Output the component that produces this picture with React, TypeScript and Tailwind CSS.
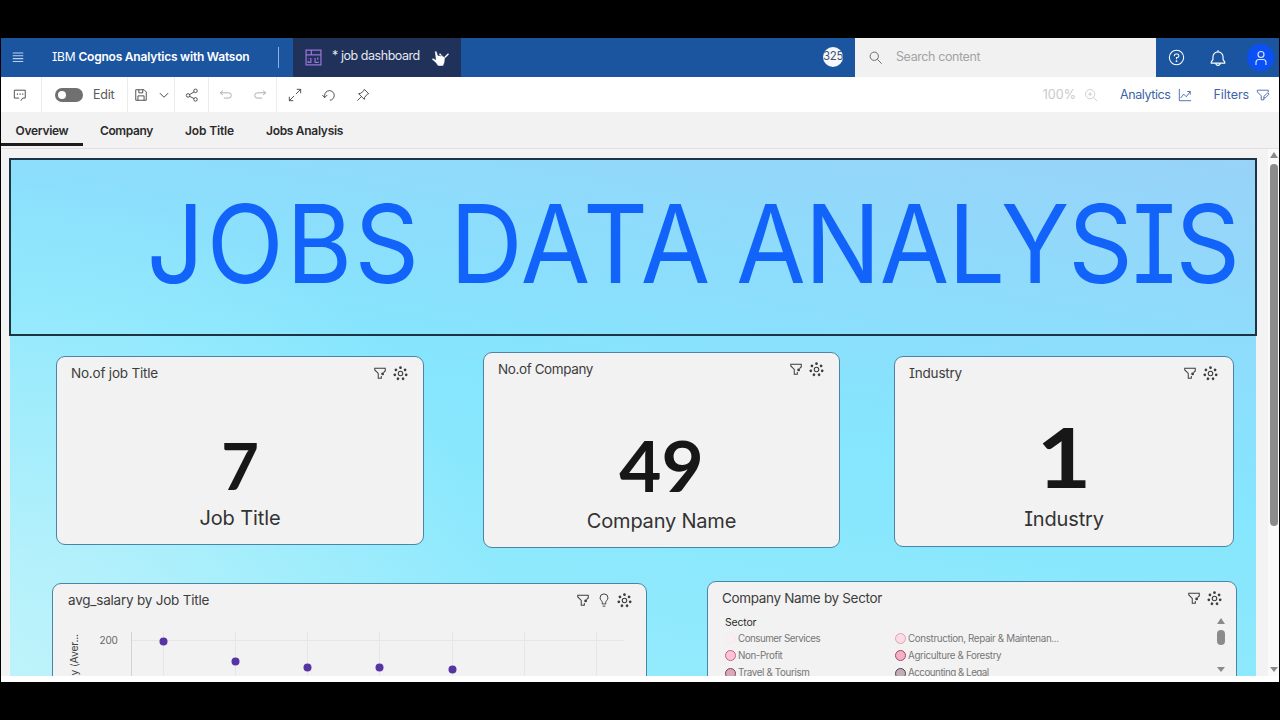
import type { ReactNode } from "react";

type IconProps = { className?: string; children: ReactNode };

const Icon = ({ className = "", children }: IconProps) => (
  <svg
    viewBox="0 0 32 32"
    fill="none"
    stroke="currentColor"
    strokeWidth="2"
    className={`shrink-0 ${className}`}
  >
    {children}
  </svg>
);

const FilterIcon = () => (
  <Icon className="w-3.5 h-3.5">
    <path d="M28 12V5H4v4l8 8v11h7v-5" strokeWidth="2.300" />
    <path d="M28 11l-4 4" strokeWidth="2.300" />
    <circle cx="22" cy="18" r="3.200" fill="currentColor" stroke="none" />
  </Icon>
);

const dots = [0, 51.4, 102.9, 154.3, 205.7, 257.1, 308.6];

const InsightIcon = () => (
  <Icon className="w-[15px] h-[15px]">
    <circle cx="16" cy="16" r="4.800" strokeWidth="2.300" />
    {dots.map((a) => (
      <circle
        key={a}
        cx="16"
        cy="3.500"
        r="2.900"
        fill="currentColor"
        stroke="none"
        transform={`rotate(${a} 16 16)`}
      />
    ))}
  </Icon>
);

const BulbIcon = () => (
  <Icon className="w-3.5 h-3.5">
    <path d="M12 25v-4c0-3-5-5-5-10a9 9 0 0 1 18 0c0 5-5 7-5 10v4zM13 30h6" strokeWidth="2.200" />
  </Icon>
);

const Header = () => (
  <header className="flex h-[39px] bg-[#1b559f] text-white">
    <div className="flex w-[292px] items-center">
      <Icon className="ml-[10px] w-3.5 h-3.5 text-[#bcd2f0]">
        <path d="M4 4.500h24M4 11h24M4 17.500h24M4 24h24" strokeWidth="2.500" />
      </Icon>
      <p className="ml-[27px] w-[198px] whitespace-nowrap pb-px text-xs tracking-[-0.22px]">
        IBM <span className="font-semibold">Cognos Analytics with Watson</span>
      </p>
      <div className="ml-7 h-[21px] w-px bg-[#8fb0dc]" />
    </div>
    <div className="relative flex w-[168px] items-center bg-[#20315a] pb-0.5">
      <Icon className="ml-3 mt-0.5 w-[17px] h-[17px] text-[#9b72dc]">
        <path d="M2 2h28v28H2zM2 11h28M12 2v9M7 17v1M11 17v8H6v-3M19 17v8h7M24 16v4" strokeWidth="2.300" />
      </Icon>
      <span className="ml-2.5 whitespace-nowrap text-[12.500px] tracking-[-0.45px] text-[#e6e9f0]">* job dashboard</span>
      <Icon className="absolute left-[145px] top-3 w-3 h-3">
        <path d="M4 10l12 12L28 10" strokeWidth="3.500" />
      </Icon>
      <svg viewBox="0 0 16 18" className="absolute left-[138px] top-3 h-[17px] w-[15px]">
        <path
          d="M4 1.500q1.200-1 2.200.4L7.500 6l1-.5 1.500.7 1.500-.4 1 1 1.600 0 .9 1.800-.5 4.400-1.500 4H7.500L5 13.500 1 10q0-1.700 2-1l2 1.300z"
          fill="#fff"
          stroke="#20315a"
          strokeWidth=".5"
        />
      </svg>
    </div>
    <div className="flex flex-1 items-center justify-end pb-0.5 pr-3">
      <div className="flex h-5 w-5 items-center overflow-hidden rounded-full bg-[#f4f8fc] text-[11.500px] tracking-[-0.3px] text-[#45556d]">
        325
      </div>
    </div>
    <div className="flex w-[301px] items-center bg-[#f1f1f1]">
      <Icon className="ml-3.5 w-3.5 h-3.5 text-[#5c5c5c]">
        <circle cx="12" cy="12" r="9.500" />
        <path d="M19 19l10 10" />
      </Icon>
      <span className="ml-[13px] text-[12.500px] tracking-[-0.4px] text-[#a3a3a3]">Search content</span>
    </div>
    <div className="flex w-[123px] items-center">
      <Icon className="ml-3 w-[17px] h-[17px]">
        <circle cx="16" cy="16" r="13.500" />
        <path d="M12 13.500v-1Q12 9.500 15 9.500h2q3.500 0 3.500 3.200T17 16h-1v3.500" />
        <circle cx="16" cy="23" r="1.600" fill="currentColor" stroke="none" />
      </Icon>
      <Icon className="ml-6 w-[18px] h-[18px]">
        <path d="M16 2v3M7 14a9 9 0 0 1 18 0v5l3 4v2H4v-2l3-4zM12 25a4 4 0 0 0 8 0" />
      </Icon>
      <div className="ml-5 flex h-[27px] w-[27px] items-center justify-center rounded-full bg-[#0b50f5]">
        <Icon className="w-4 h-4 text-[#d8e6ff]">
          <circle cx="16" cy="9" r="6" strokeWidth="2.300" />
          <path d="M6 30v-5q0-6 6-6h8q6 0 6 6v5" strokeWidth="2.300" />
        </Icon>
      </div>
    </div>
  </header>
);

const Toolbar = () => (
  <div className="flex h-[35px] bg-white text-[#3d3d3d]">
    <div className="flex w-[41px] items-center border-r border-[#ececec] pl-3">
      <Icon className="w-3.5 h-3.5">
        <path d="M18 29l4-6h6V5H3v18h11" />
        <path d="M9 14h2.500M15 14h2.500M21 14h2.500" strokeWidth="3" />
      </Icon>
    </div>
    <div className="flex w-[86px] items-center border-r border-[#ececec] pl-[13px]">
      <div className="h-3.5 w-7 rounded-full bg-[#707070] p-[3px]">
        <div className="h-2 w-2 rounded-full bg-white" />
      </div>
      <span className="ml-2.5 pt-0.5 text-[12.500px] tracking-[-0.2px] text-[#5a5a5a]">Edit</span>
    </div>
    <div className="flex w-[47px] items-center border-r border-[#ececec] pl-[6px]">
      <Icon className="w-3.5 h-3.5">
        <path d="M4 4h19l5 5v19H4zM11 4v7h9V4M9 28V18h14v10" />
      </Icon>
      <Icon className="ml-[10px] w-3 h-3">
        <path d="M5 11l11 11 11-11" strokeWidth="2.500" />
      </Icon>
    </div>
    <div className="flex w-[34px] items-center justify-center border-r border-[#ececec]">
      <Icon className="w-3.5 h-3.5">
        <circle cx="24" cy="6.500" r="4" />
        <circle cx="7" cy="17" r="4" />
        <circle cx="24" cy="26" r="4" />
        <path d="M10.500 15l10-6M10.500 19l10 5" />
      </Icon>
    </div>
    <div className="flex w-[68px] items-center border-r border-[#ececec] pl-2.5 text-[#a4a4a4]">
      <Icon className="w-3.5 h-3.5">
        <path d="M9 6l-6 5 6 5M3 11h19q6 0 6 6t-6 6H11" />
      </Icon>
      <Icon className="ml-5 w-3.5 h-3.5">
        <path d="M23 6l6 5-6 5M29 11H10q-6 0-6 6t6 6h11" />
      </Icon>
    </div>
    <div className="flex w-[102px] items-center pl-[11px]">
      <Icon className="w-3.5 h-3.5">
        <path d="M20 3h9v9M29 3L18 14M12 29H3v-9M3 29l11-11" />
      </Icon>
      <Icon className="ml-5 w-3.5 h-3.5">
        <path d="M18 28a11 11 0 1 0-12-11v5M1 16l5 6 6-6" />
      </Icon>
      <Icon className="ml-5 w-3.5 h-3.5">
        <path d="M19 3l10 10-3 1-6 7-1 5L6 13l5-1 7-6zM12.500 19.500L3 29" />
      </Icon>
    </div>
    <div className="flex flex-1 items-center justify-end pr-[9px] text-[12.500px] text-[#3d64a8]">
      <span className="pt-0.5 text-[#c9c9c9]">100%</span>
      <Icon className="ml-2 w-3.5 h-3.5 text-[#c9c9c9]">
        <circle cx="14" cy="14" r="10.500" />
        <path d="M22 22l8 8M14 9.500v9M9.500 14h9" />
      </Icon>
      <span className="ml-[22px] pt-0.5 tracking-[-0.4px]">Analytics</span>
      <Icon className="ml-[7px] w-3.5 h-3.5">
        <path d="M3 2v27h27M6 23l7-9 6 6L28 8M21 8h7v7" />
      </Icon>
      <span className="ml-[22px] pt-0.5 tracking-[-0.1px]">Filters</span>
      <Icon className="ml-[7px] w-3.5 h-3.5">
        <path d="M28 10V5H3v4l9 9v9h6v-5M18 19l9-8 3 3-8 8-4 1z" />
      </Icon>
    </div>
  </div>
);

const Tabs = () => (
  <nav className="flex h-[37px] border-b border-[#e2dfdd] bg-[#f2f2f2] text-xs font-semibold text-[#2b2b2b]">
    <div className="flex h-[34px] w-[82px] items-center border-b-[3px] border-[#1c1c1c] pl-[14.500px] pt-[7px] tracking-[-0.3px]">
      Overview
    </div>
    <div className="w-[85px] pl-[17px] pt-[11px] tracking-[-0.4px]">Company</div>
    <div className="w-[81px] pl-[17px] pt-[11px] tracking-[-0.15px]">Job Title</div>
    <div className="pl-[17px] pt-[11px] tracking-[-0.3px]">Jobs Analysis</div>
  </nav>
);

type KpiProps = {
  title: string;
  value: string;
  label: string;
  box: string;
  titleClass: string;
  valueClass: string;
  labelClass: string;
};

const Kpi = ({ title, value, label, box, titleClass, valueClass, labelClass }: KpiProps) => (
  <div className={`shrink-0 rounded-[9px] border border-[#4c84a5] bg-[#f2f2f2] ${box}`}>
    <div className="flex h-8 items-center pl-3.5 pr-[15px] text-[#3d3d3d]">
      <span className={`flex-1 text-[13.500px] ${titleClass}`}>{title}</span>
      <FilterIcon />
      <div className="w-1.5" />
      <InsightIcon />
    </div>
    <div className={`text-center font-['Lato','Inter',sans-serif] font-bold leading-none text-[#171717] ${valueClass}`}>
      {value}
    </div>
    <div className={`text-center text-xl leading-6 text-[#333] ${labelClass}`}>{label}</div>
  </div>
);

const gridX = [111, 183, 255, 327, 400, 472, 544];
const points = [
  [111, 58],
  [183, 78],
  [255, 84],
  [327, 84],
  [400, 86],
];

const SalaryChart = () => (
  <div className="h-[120px] w-[595px] shrink-0 rounded-[9px] border border-[#4c84a5] bg-[#f2f2f2]">
    <div className="flex h-8 items-center pl-[15px] pr-3.5 text-[#3d3d3d]">
      <span className="flex-1 text-[13.500px] tracking-[-0.22px]">avg_salary by Job Title</span>
      <FilterIcon />
      <div className="w-[7px]" />
      <BulbIcon />
      <div className="w-1.5" />
      <InsightIcon />
    </div>
    <svg viewBox="1 33 593 70" className="h-[70px] w-[593px]">
      <path d="M79 57.500H572" stroke="#e6e6e6" />
      <path d="M79.500 49v60" stroke="#d2d2d2" />
      {gridX.map((x) => (
        <path key={x} d={`M${x + 0.5} 49v60`} stroke="#e6e6e6" />
      ))}
      {points.map(([x, y]) => (
        <circle key={x} cx={x + 0.5} cy={y + 0.5} r="4" fill="#5634a5" />
      ))}
      <text x="47.500" y="61" fontSize="10" letterSpacing="-0.200" fill="#666">
        200
      </text>
      <text transform="translate(26 92.500) rotate(-90)" fontSize="10.500" letterSpacing="-0.200" fill="#444">
        y (Aver...
      </text>
    </svg>
  </div>
);

const sectors = [
  { name: "Consumer Services", dot: "border-[#f5ecf0] bg-[#f7eff2]", text: "tracking-[-0.5px]" },
  { name: "Construction, Repair & Maintenan...", dot: "border-[#e5a0b8] bg-[#fbdbe5]", text: "tracking-[-0.36px]" },
  { name: "Non-Profit", dot: "border-[#d05c89] bg-[#fbc4d7]", text: "tracking-[-0.4px]" },
  { name: "Agriculture & Forestry", dot: "border-[#a94468] bg-[#f3b1c6]", text: "tracking-[-0.36px]" },
  { name: "Travel & Tourism", dot: "border-[#823f58] bg-[#d9a9b8]", text: "tracking-[-0.36px]" },
  { name: "Accounting & Legal", dot: "border-[#54404a] bg-[#c1adb5]", text: "tracking-[-0.5px]" },
];

const SectorChart = () => (
  <div className="h-[120px] w-[530px] shrink-0 rounded-[9px] border border-[#4c84a5] bg-[#f2f2f2]">
    <div className="flex h-8 items-center pl-3.5 pr-3.5 text-[#3d3d3d]">
      <span className="flex-1 text-[13.500px] tracking-[-0.33px]">Company Name by Sector</span>
      <FilterIcon />
      <div className="w-1.5" />
      <InsightIcon />
    </div>
    <div className="flex pl-[17px] pr-[11px]">
      <div className="flex-1">
        <p className="pt-px text-[10.500px] leading-[15px] tracking-[-0.2px] text-[#2b2b2b]">Sector</p>
        <div className="grid grid-cols-[170px_1fr]">
          {sectors.map((s) => (
            <div key={s.name} className="flex h-[17.300px] items-center gap-0.5">
              <span className={`h-[11px] w-[11px] rounded-full border-[1.500px] ${s.dot}`} />
              <span className={`whitespace-nowrap pt-px text-[9.800px] text-[#777] ${s.text}`}>{s.name}</span>
            </div>
          ))}
        </div>
      </div>
      <svg viewBox="0 0 8 60" className="mt-1 h-[60px] w-2 fill-[#8b8b8b]">
        <path d="M4 0l4 6H0zM4 54l4-5H0z" />
        <rect x="0" y="12" width="8" height="15" rx="4" />
      </svg>
    </div>
  </div>
);

const App = () => (
  <div className="h-[720px] w-[1280px] overflow-hidden bg-black px-px pt-[38px] font-['Inter','Noto_Sans',sans-serif] [font-feature-settings:'cv08']">
    <div className="flex h-[644px] flex-col bg-white">
      <Header />
      <Toolbar />
      <Tabs />
      <div className="flex h-[527px] overflow-hidden bg-[#f4f3f3]">
        <main className="ml-[9px] mt-[9px] h-[518px] w-[1246px] bg-[radial-gradient(circle_at_0%_100%,rgba(200,244,250,0.8),rgba(160,240,252,0)_500px),linear-gradient(190deg,#98d2f9_0%,#8cdefc_30%,#85e6fd_48%,#8fe9fd_75%,#98effd_100%)]">
          <div className="-ml-px flex h-[178px] w-[1248px] justify-end border-2 border-[#1d3445] pr-[16px] pt-[18.500px]">
            <h1 className="origin-right scale-x-[0.928] whitespace-nowrap text-[108.500px] leading-[130px] text-[#1263fa]">
              <span className="tracking-[2.700px]">JOBS</span>{" "}
              <span className="tracking-[1.500px]">DATA</span>{" "}
              <span className="-ml-[4px] tracking-[-1px]">ANALYSIS</span>
            </h1>
          </div>
          <div className="flex h-[230px] items-start">
            <Kpi
              title="No.of job Title"
              value="7"
              label="Job Title"
              box="ml-[46px] mt-5 h-[189px] w-[368px]"
              titleClass="tracking-[-0.2px]"
              valueClass="mt-[44px] text-[65px]"
              labelClass="mt-[8px] tracking-[-0.1px]"
            />
            <Kpi
              title="No.of Company"
              value="49"
              label="Company Name"
              box="ml-[59px] mt-4 h-[196px] w-[357px]"
              titleClass="tracking-[-0.4px]"
              valueClass="mt-[45px] scale-x-[1.040] text-[70px]"
              labelClass="mt-[9px] tracking-[-0.2px]"
            />
            <Kpi
              title="Industry"
              value="1"
              label="Industry"
              box="ml-[54px] mt-5 h-[191px] w-[340px]"
              titleClass="tracking-[-0.2px]"
              valueClass="mt-[26px] scale-x-[1.140] text-[83px]"
              labelClass="mt-[9px] tracking-[-0.15px]"
            />
          </div>
          <div className="flex items-start">
            <div className="ml-[42px] mt-[17px]">
              <SalaryChart />
            </div>
            <div className="ml-[60px] mt-[15px]">
              <SectorChart />
            </div>
          </div>
        </main>
        <div className="ml-3 flex flex-1 flex-col items-center bg-[#fafafa] pl-px">
          <svg viewBox="0 0 8 527" className="h-[527px] w-2 fill-[#8b8b8b]">
            <path d="M4 3l4 6H0zM4 523l4-5H0z" />
            <rect x="0" y="15" width="8" height="362" rx="4" />
          </svg>
        </div>
      </div>
    </div>
  </div>
);

export default App;
